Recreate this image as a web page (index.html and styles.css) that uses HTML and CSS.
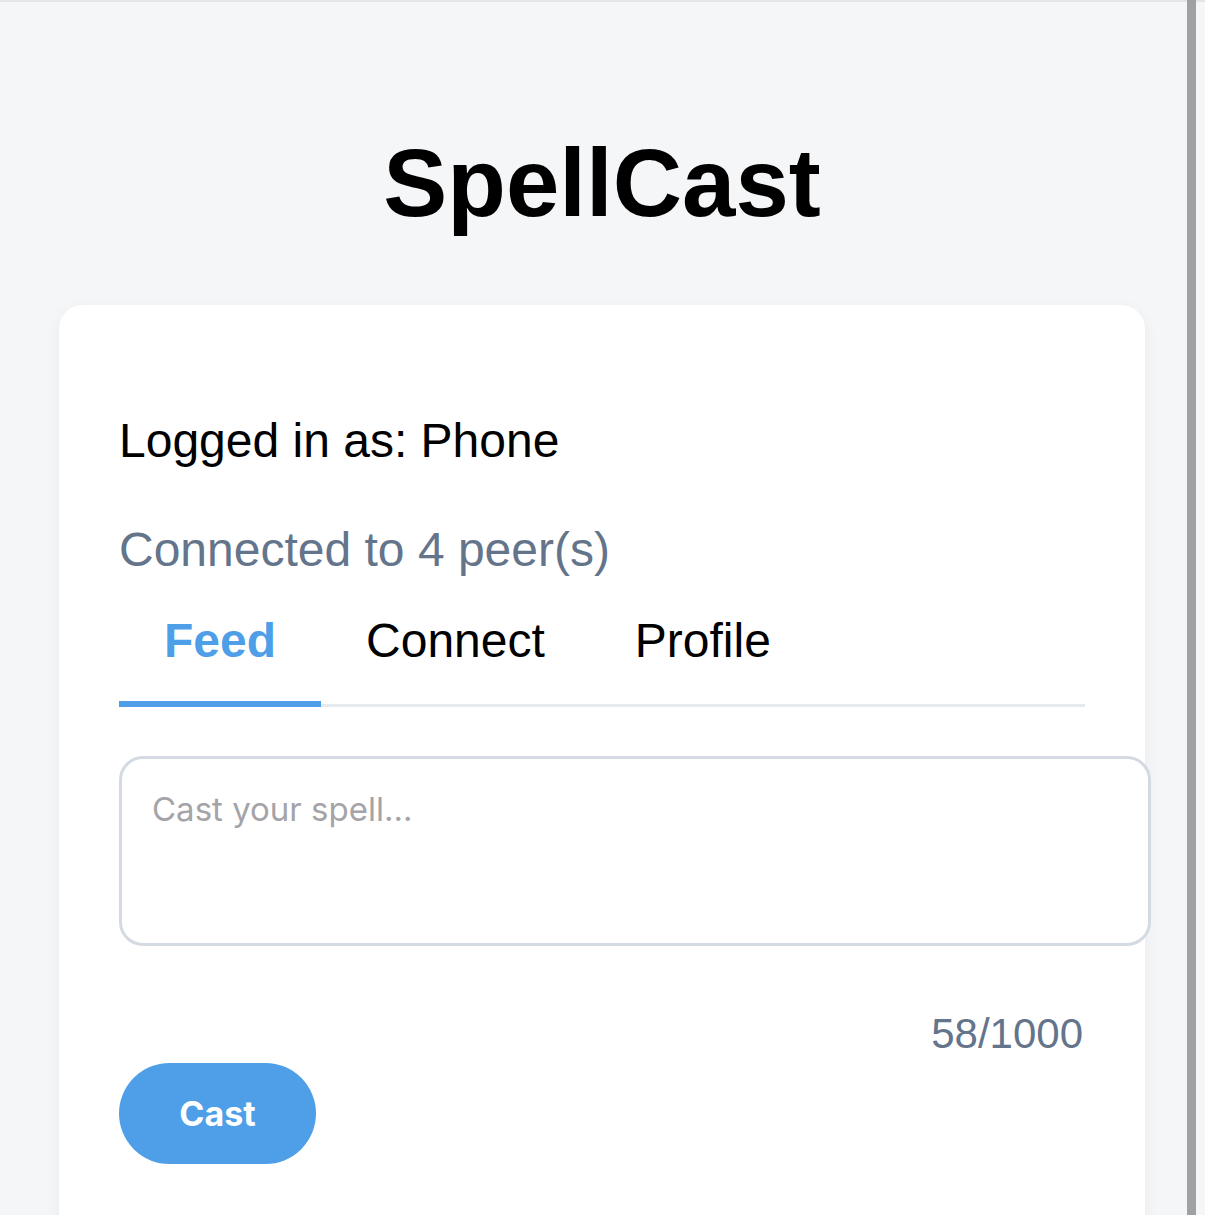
FILE: index.html
```html
<!DOCTYPE html>
<html lang="en">
<head>
<meta charset="utf-8">
<title>SpellCast</title>
<link rel="stylesheet" href="styles.css">
</head>
<body>
<div class="page">
  <h1 class="title">SpellCast</h1>
  <main class="card">
    <p class="user">Logged in as: Phone</p>
    <p class="peers">Connected to 4 peer(s)</p>
    <nav class="tabs">
      <button class="tab active">Feed</button>
      <button class="tab">Connect</button>
      <button class="tab">Profile</button>
    </nav>
    <form class="composer">
      <textarea class="spell" placeholder="Cast your spell..."></textarea>
      <div class="counter">58/1000</div>
      <button type="button" class="cast">Cast</button>
    </form>
  </main>
</div>
<div class="scrollbar"></div>
</body>
</html>
```
FILE: styles.css
```css
html, body {
  margin: 0;
  padding: 0;
}
body {
  background: #f5f6f8;
  border-top: 2px solid #e3e5e8;
  font-family: "Liberation Sans", Arial, sans-serif;
  color: #000;
  overflow: hidden;
  height: 1213px;
}
.page {
  padding: 0 60px 0 59px;
}
.title {
  margin: 126px 0 0;
  font-size: 96px;
  line-height: 110px;
  font-weight: 700;
  text-align: center;
}
.card {
  margin-top: 67px;
  background: #fff;
  border-radius: 24px;
  box-shadow: 0 4px 16px rgba(0, 0, 0, 0.05);
  padding: 60px 60px 120px;
}
.user, .peers {
  font-size: 48px;
  line-height: 58px;
  margin: 0;
}
.user {
  padding-top: 47px;
}
.peers {
  margin-top: 51px;
  color: #64748b;
}
.tabs {
  display: flex;
  border-bottom: 3px solid #e6eaee;
}
.tab {
  font-family: "Liberation Sans", Arial, sans-serif;
  font-size: 48px;
  line-height: 58px;
  background: none;
  border: none;
  border-bottom: 6px solid transparent;
  margin-bottom: -3px;
  padding: 33px 45px 31px;
  color: #000;
}
.tab.active {
  color: #4e9fe8;
  font-weight: 700;
  border-bottom-color: #4e9fe8;
}
.composer {
  margin-top: 49px;
}
.spell {
  display: block;
  width: 100%;
  height: 124px;
  box-sizing: content-box;
  padding: 30px;
  border: 3px solid #d3dae1;
  border-radius: 24px;
  font-family: Inter, "Liberation Sans", sans-serif;
  font-size: 33px;
  resize: none;
  margin: 0;
}
.spell::placeholder {
  color: #a4a4a8;
}
.counter {
  margin-top: 64px;
  text-align: right;
  padding-right: 2px;
  font-size: 42px;
  color: #64748b;
}
.cast {
  display: block;
  margin-top: 5px;
  width: 197px;
  height: 101px;
  border: none;
  border-radius: 51px;
  background: #4e9fe8;
  color: #fff;
  font-family: Inter, "Liberation Sans", sans-serif;
  font-weight: 700;
  font-size: 34px;
  padding: 0;
}
.scrollbar {
  position: fixed;
  top: 0;
  bottom: 0;
  left: 1187px;
  width: 9px;
  background: #a0a1a4;
}
```
